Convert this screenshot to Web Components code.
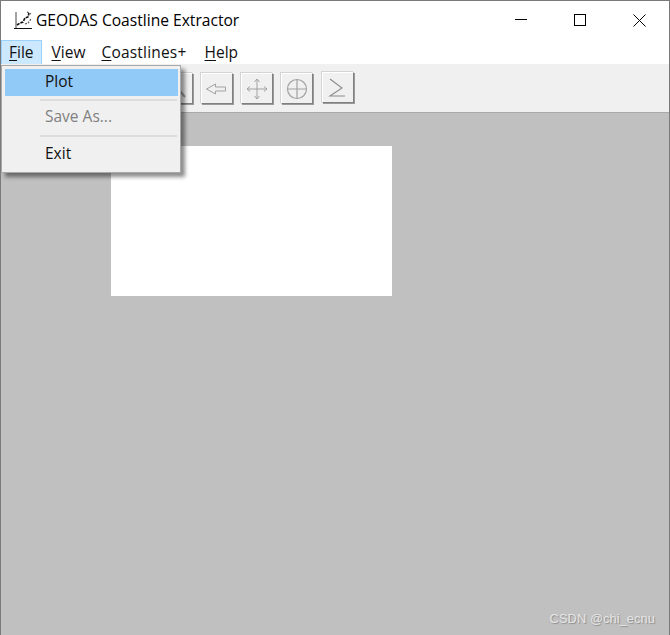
<!DOCTYPE html>
<html>
<head>
<meta charset="utf-8">
<title>GEODAS Coastline Extractor</title>
<style>
html, body { margin: 0; padding: 0; height: 100%; background: #c0c0c0; }
body { font-family: "Open Sans", "Noto Sans", sans-serif; overflow: hidden; }
</style>
</head>
<body>
<app-window>
  <title-bar slot="top">GEODAS Coastline Extractor</title-bar>
  <menu-bar slot="top"></menu-bar>
  <tool-bar slot="top"></tool-bar>
  <plot-area></plot-area>
  <file-menu slot="over"></file-menu>
</app-window>

<script>
"use strict";

class AppWindow extends HTMLElement {
  constructor() {
    super();
    this.attachShadow({ mode: "open" }).innerHTML = `
<style>
:host {
    display: flex;
    flex-direction: column;
    position: relative;
    width: 670px;
    height: 635px;
    box-sizing: border-box;
    border: 1px solid #7a7a7a;
    border-bottom: 0;
    background: #c0c0c0;
    overflow: hidden;
}
.main { flex: 1; display: flex; flex-direction: column; }
</style>
<slot name="top"></slot>
<div class="main"><slot></slot></div>
<slot name="over"></slot>`;
  }
}
customElements.define("app-window", AppWindow);

//===================================================

class TitleBar extends HTMLElement {
  constructor() {
    super();
    this.attachShadow({ mode: "open" }).innerHTML = `
<style>
:host {
    display: flex;
    align-items: center;
    height: 39px;
    background: #fff;
    color: #000;
    font-size: 15.6px;
    padding-left: 12px;
}
svg { display: block; }
.icon { margin-right: 4px; margin-top: -3px; }
.text { flex: 1; margin-top: -1px; white-space: nowrap; }
.ctl { width: 59px; height: 39px; display: flex; align-items: center; justify-content: center; margin-top: -1px; }
.ctl.min { margin-right: 0; position: relative; left: -1px; }
.ctl.max { position: relative; left: -1px; }
</style>
<svg class="icon" width="19" height="19" viewBox="0 0 19 19">
  <path d="M1 18.5H20" stroke="#111" fill="none"/>
  <path d="M3 2v16" stroke="#444" fill="none"/>
  <path d="M4 15l3-2 3-1 2-4 3-1 1-4" stroke="#111" stroke-width="1.6" fill="none" stroke-dasharray="3 1"/>
  <path d="M12 14l3-1 3-4M14 2l4 2" stroke="#555" stroke-width="1.2" fill="none" stroke-dasharray="2 1"/>
</svg>
<span class="text"><slot></slot></span>
<div class="ctl min"><svg width="12" height="12"><path d="M0 5.5H12" stroke="#000"/></svg></div>
<div class="ctl max"><svg width="12" height="12"><rect x=".5" y=".5" width="11" height="11" fill="none" stroke="#000"/></svg></div>
<div class="ctl"><svg width="13" height="13"><path d="M.5 .5L12.5 12.5M12.5 .5L.5 12.5" stroke="#000" fill="none"/></svg></div>`;
  }
}
customElements.define("title-bar", TitleBar);

//===================================================

class MenuBar extends HTMLElement {
  constructor() {
    super();
    const items = [["F", "ile", "on"], ["V", "iew", "next"], ["C", "oastlines+", "wide"], ["H", "elp", ""]];
    const html = items.reduce(
      (accum, [key, rest, cls]) =>
        `${accum}<span class="item ${cls}"><u>${key}</u>${rest}</span>`,
      ""
    );
    this.attachShadow({ mode: "open" }).innerHTML = `
<style>
:host {
    display: flex;
    height: 24px;
    background: #fff;
    color: #111;
    font-size: 15.5px;
    border-bottom: 1px solid #f0f0f0;
}
.item { padding: 0 8px; line-height: 23px; border: 1px solid transparent; border-bottom: 0; margin-right: -1px; }
.on { background: #cce8ff; border-color: #99d1ff; margin-right: 0; padding: 0 7px; }
.next { padding-left: 9px; padding-right: 7px; }
.wide { letter-spacing: .2px; margin-right: 0; }
u { text-underline-offset: 2px; }
</style>
${html}`;
  }
}
customElements.define("menu-bar", MenuBar);

//===================================================

class ToolButton extends HTMLElement {
  constructor() {
    super();
    this.attachShadow({ mode: "open" }).innerHTML = `
<style>
:host {
    display: flex;
    align-items: center;
    justify-content: center;
    box-sizing: border-box;
    width: 32px;
    height: 31px;
    background: #f0f0f0;
    border: 1px solid;
    border-color: #fff #808080 #808080 #fff;
    box-shadow: 1px 1px 0 #9a9a9a, -1px -1px 0 #d4d4d4;
}
</style>
<slot></slot>`;
  }
}
customElements.define("tool-button", ToolButton);

//===================================================

class ToolBar extends HTMLElement {
  constructor() {
    super();
    this.attachShadow({ mode: "open" }).innerHTML = `
<style>
:host {
    display: flex;
    gap: 8px;
    box-sizing: border-box;
    height: 48px;
    padding: 8px 0 0 160px;
    background: #f0f0f0;
    border-bottom: 1px solid #a9a9a9;
}
svg { display: block; }
.last { margin-top: -1px; margin-left: 1px; }
</style>
<tool-button><svg width="24" height="24"><path d="M8 6l12 14" stroke="#9a9a9a" stroke-width="2" fill="none"/></svg></tool-button>
<tool-button><svg width="24" height="24" fill="none" stroke="#a2a2a2"><path d="M1.500 12l9-5v3h10v4h-10v3z"/></svg></tool-button>
<tool-button><svg width="24" height="24" fill="none" stroke="#a2a2a2"><path d="M12 2v20M2 12h20M9.500 5l2.500-3 2.500 3M9.500 19l2.500 3 2.500-3M5 9.500L2 12l3 2.500M19 9.500l3 2.500-3 2.500"/></svg></tool-button>
<tool-button><svg width="24" height="24" fill="none" stroke="#a2a2a2" stroke-width="1.2"><circle cx="12" cy="12" r="9.500"/><path d="M12 2.500v19M2.500 12h19"/></svg></tool-button>
<tool-button class="last"><svg width="24" height="24" fill="none" stroke="#8c8c8c" stroke-width="1.1"><path d="M4 3l12 9-12 8h15"/></svg></tool-button>`;
  }
}
customElements.define("tool-bar", ToolBar);

//===================================================

class PlotArea extends HTMLElement {
  constructor() {
    super();
    this.attachShadow({ mode: "open" }).innerHTML = `
<style>
:host {
    display: block;
    flex: 1;
    position: relative;
    background: #c0c0c0;
    padding: 33px 0 0 110px;
}
.sheet { width: 281px; height: 150px; background: #fff; }
.mark {
    position: absolute;
    right: 14px;
    bottom: 9px;
    font: 12.8px "Liberation Sans", sans-serif;
    color: #e6e6e6;
    text-shadow: 1px 1px 1px #8c8c8c;
    letter-spacing: .1px;
}
</style>
<div class="sheet"></div>
<div class="mark">CSDN @chi_ecnu</div>`;
  }
}
customElements.define("plot-area", PlotArea);

//===================================================

class FileMenu extends HTMLElement {
  constructor() {
    super();
    this.attachShadow({ mode: "open" }).innerHTML = `
<style>
:host {
    display: block;
    position: absolute;
    left: 0;
    top: 64px;
    width: 180px;
    box-sizing: border-box;
    padding: 3px;
    background: #f0f0f0;
    border: 1px solid #a8a8a8;
    box-shadow: 4px 4px 4px rgba(0, 0, 0, .45);
    font-size: 15.5px;
    color: #111;
}
.row { height: 27px; line-height: 25px; padding-left: 40px; margin-right: -1px; }
.hot { background: #91c9f7; }
.off { color: #808080; height: 31px; line-height: 31px; }
.sep { height: 2px; margin: 3px 0 0 35px; background: #dcdcdc; }
</style>
<div class="row hot">Plot</div>
<div class="sep"></div>
<div class="row off">Save As...</div>
<div class="sep"></div>
<div class="row" style="height:32px;line-height:33px">Exit</div>`;
  }
}
customElements.define("file-menu", FileMenu);
</script>
</body>
</html>
